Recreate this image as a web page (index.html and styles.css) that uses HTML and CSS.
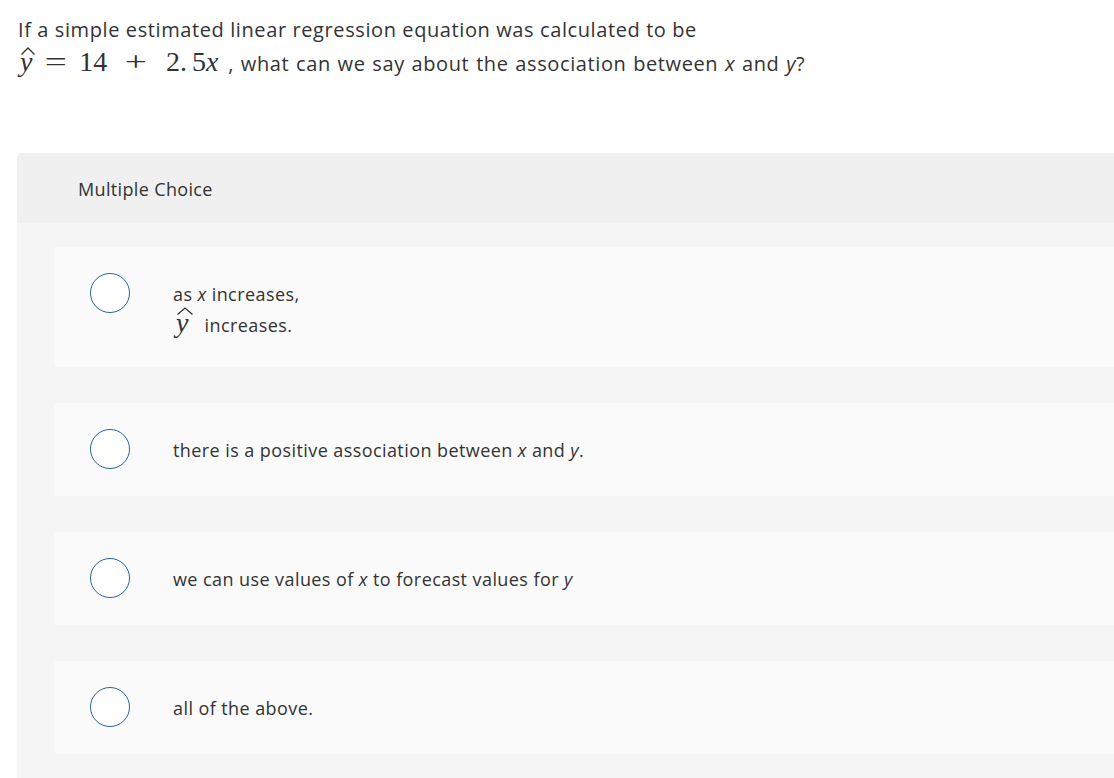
FILE: index.html
```html
<!DOCTYPE html>
<html>
<head>
<meta charset="utf-8">
<link rel="stylesheet" href="styles.css">
</head>
<body>
<div class="question">
  <p class="q-line">If a simple estimated linear regression equation was calculated to be</p>
  <p class="q-line eq-line"><span class="math"><span class="hat-y"><i>y</i><svg class="hat" viewBox="0 0 14 8" width="14" height="8"><path d="M0.5 7.5 L7 1 L13.5 7.5" fill="none" stroke="#333" stroke-width="1.3"/></svg></span><span class="op eq">=</span><span class="num n14">14</span><span class="op plus">+</span><span class="num n2">2.</span><span class="num n5">5<i>x</i></span></span> , what can we say about the association between <i>x</i> and <i>y</i>?</p>
</div>

<section class="panel">
  <div class="panel-head">Multiple Choice</div>
  <div class="panel-body">
    <div class="option">
      <span class="radio"></span>
      <div class="opt-text">
        <div>as <i>x</i> increases,</div>
        <div><span class="math small"><span class="hat-y"><i>y</i><svg class="hat" viewBox="0 0 16 8" width="16" height="8"><path d="M0.5 7.5 L8 1 L15.5 7.5" fill="none" stroke="#333" stroke-width="1.3"/></svg></span></span> increases.</div>
      </div>
    </div>
    <div class="option">
      <span class="radio"></span>
      <div class="opt-text">there is a positive association between <i>x</i> and <i>y</i>.</div>
    </div>
    <div class="option">
      <span class="radio"></span>
      <div class="opt-text">we can use values of <i>x</i> to forecast values for <i>y</i></div>
    </div>
    <div class="option">
      <span class="radio"></span>
      <div class="opt-text">all of the above.</div>
    </div>
  </div>
</section>
</body>
</html>
```

FILE: styles.css
```css
html, body {
  margin: 0;
  padding: 0;
  background: #fff;
  overflow: hidden;
}
body {
  font-family: "Open Sans", Lato, sans-serif;
  color: #333;
}
.question {
  height: 68px;
  padding: 13px 18px 0;
  font-size: 20px;
  letter-spacing: 0.6px;
}
.q-line {
  margin: 0;
  height: 34px;
  line-height: 34px;
  white-space: nowrap;
}
.eq-line {
  word-spacing: 1px;
}
.math {
  font-family: "Liberation Serif", "DejaVu Serif", serif;
  font-size: 28px;
  letter-spacing: 0;
  word-spacing: 0;
  line-height: 1;
  color: #333;
}
.eq-line > .math {
  margin-right: 3px;
}
.hat-y {
  position: relative;
  display: inline-block;
  padding: 0 2px;
}
.hat {
  position: absolute;
  left: 3px;
  top: -1px;
}
.op {
  display: inline-block;
  transform: scaleX(1.4);
}
.op.eq {
  margin-left: 14px;
}
.num.n14 {
  margin-left: 15px;
}
.op.plus {
  margin-left: 21px;
}
.num.n2 {
  margin-left: 22px;
}
.num.n5 {
  margin-left: 5px;
}
.panel {
  margin: 72px -30px 0 17px;
  background: #f5f5f5;
  border-radius: 4px 4px 0 0;
}
.panel-head {
  height: 70px;
  line-height: 72px;
  padding-left: 61px;
  background: #f0f0f0;
  border-radius: 4px 4px 0 0;
  font-size: 18px;
  letter-spacing: 0.35px;
}
.panel-body {
  padding: 24px 0 40px 37px;
}
.option {
  display: flex;
  align-items: flex-start;
  gap: 43px;
  background: #fafafa;
  border-radius: 4px;
  padding: 26px 0 27px 36px;
  margin-bottom: 36px;
}
.radio {
  flex-shrink: 0;
  width: 40px;
  height: 40px;
  box-sizing: border-box;
  border: 1.6px solid #2b619b;
  border-radius: 50%;
  background: #fff;
}
.opt-text {
  padding-top: 6px;
  font-size: 18px;
  line-height: 30px;
  letter-spacing: 0.42px;
}
.math.small {
  font-size: 28px;
  margin-right: 9px;
}
.math.small .hat-y {
  padding-left: 3px;
}
.math.small .hat {
  left: 4px;
  top: -2px;
}
```
